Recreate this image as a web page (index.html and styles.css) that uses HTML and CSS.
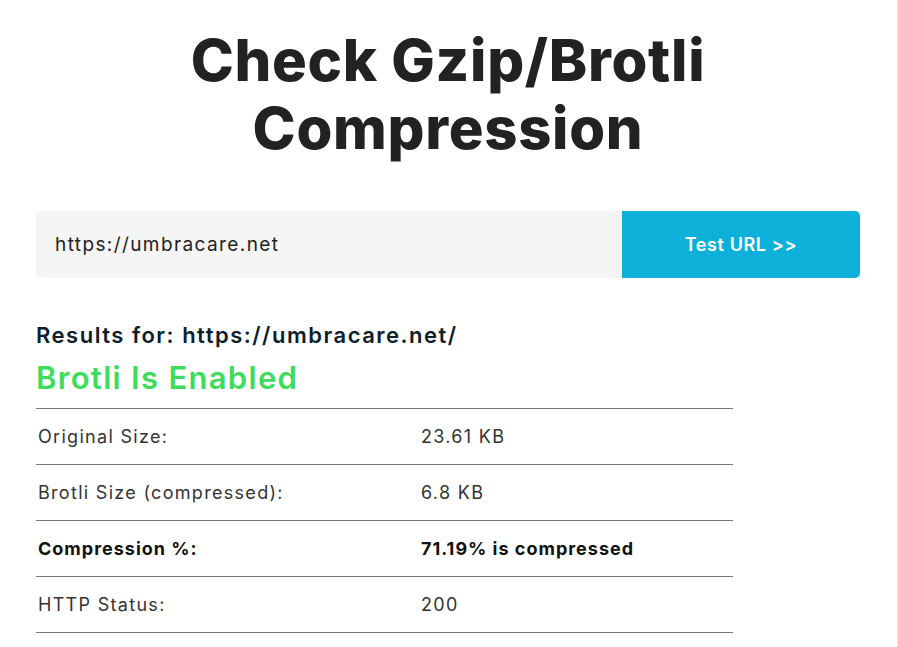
FILE: index.html
```html
<!DOCTYPE html>
<html lang="en">
<head>
    <meta charset="UTF-8" />
    <meta name="viewport" content="width=device-width, initial-scale=1.0" />
    <title>Check Gzip/Brotli Compression</title>
    <link rel="stylesheet" href="styles.css">
</head>
<body>
    <div class="page">
        <h1>Check Gzip/Brotli Compression</h1>

        <form class="test-form">
            <input type="text" class="url-input" value="https://umbracare.net">
            <button type="button" class="test-btn">Test URL &gt;&gt;</button>
        </form>

        <div class="results">
            <h3 class="results-for">Results for: https://umbracare.net/</h3>
            <h2 class="status-ok">Brotli Is Enabled</h2>

            <table class="results-table">
                <tr>
                    <td>Original Size:</td>
                    <td>23.61 KB</td>
                </tr>
                <tr>
                    <td>Brotli Size (compressed):</td>
                    <td>6.8 KB</td>
                </tr>
                <tr class="highlight">
                    <td>Compression %:</td>
                    <td>71.19% is compressed</td>
                </tr>
                <tr>
                    <td>HTTP Status:</td>
                    <td>200</td>
                </tr>
            </table>
        </div>
    </div>
</body>
</html>
```

FILE: styles.css
```css
body {
    margin: 0;
    font-family: 'Inter', 'Noto Sans', sans-serif;
    color: #222;
    background-color: #fff;
}

.page {
    width: 824px;
    min-height: 647px;
    padding: 0 37px 0 36px;
    border-right: 1px solid #e6e6e6;
    box-sizing: content-box;
}

h1 {
    margin: 0;
    padding-top: 26px;
    text-align: center;
    font-size: 58px;
    font-weight: 800;
    line-height: 68px;
    color: #222;
    letter-spacing: 0.7px;
}

.test-form {
    display: flex;
    margin-top: 49px;
    height: 67px;
}

.url-input {
    flex: 1;
    border: none;
    border-radius: 5px 0 0 5px;
    background-color: #f5f5f5;
    padding: 0 19px;
    font-family: inherit;
    font-size: 19px;
    letter-spacing: 1.4px;
    color: #222;
    outline: none;
}

.test-btn {
    width: 238px;
    border: none;
    border-radius: 0 5px 5px 0;
    background-color: #0cb0d8;
    color: #fff;
    font-family: inherit;
    font-size: 18px;
    font-weight: 600;
    letter-spacing: 0.6px;
    cursor: pointer;
}

.results {
    margin-top: 42px;
}

.results-for {
    margin: 0;
    font-size: 22px;
    font-weight: 600;
    line-height: 30px;
    letter-spacing: 1.5px;
    color: #0d1e2c;
}

.status-ok {
    margin: 8px 0 0;
    font-size: 31px;
    font-weight: 600;
    line-height: 40px;
    letter-spacing: 1.3px;
    color: #3ddc5c;
}

.results-table {
    width: 697px;
    margin-top: 10px;
    border-collapse: collapse;
    border-top: 1px solid #777;
}

.results-table td {
    height: 55px;
    padding: 0 2px;
    border-bottom: 1px solid #777;
    font-size: 18px;
    letter-spacing: 1.3px;
    color: #333;
}

.results-table td:first-child {
    width: 379px;
}

.results-table .highlight td {
    font-weight: 700;
    letter-spacing: 1px;
    color: #111;
}
```
